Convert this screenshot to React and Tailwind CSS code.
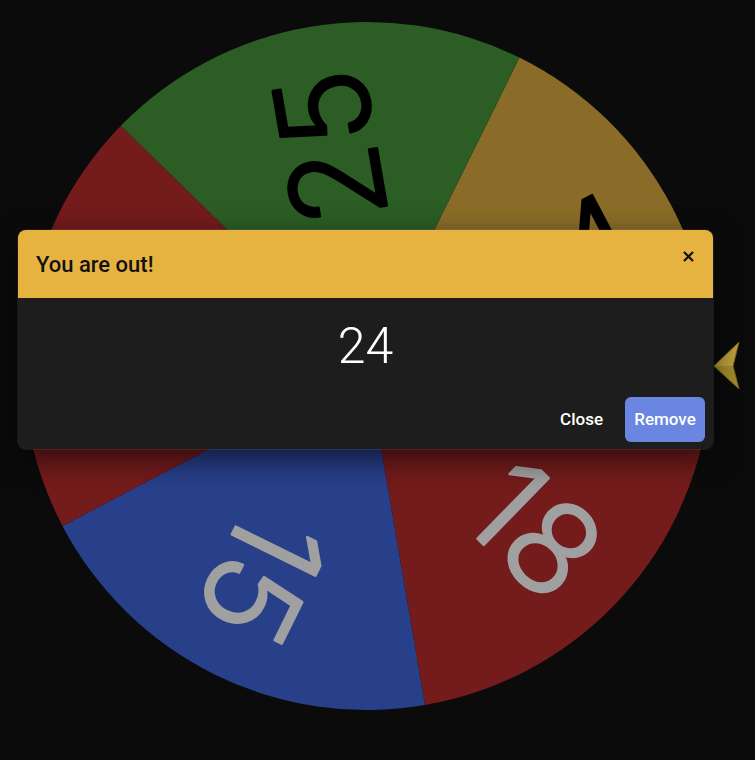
import React from "react";

const CX = 344;
const CY = 344;
const R = 344;

const segments = [
  { id: 1, label: "24", color: "#8a6c28", text: "#000000", start: 296.3 },
  { id: 2, label: "18", color: "#741b1b", text: "#a0a0a0", start: 8.3 },
  { id: 3, label: "15", color: "#283f8a", text: "#a0a0a0", start: 80.3 },
  { id: 4, label: "9", color: "#741b1b", text: "#a0a0a0", start: 152.3 },
  { id: 5, label: "25", color: "#2b5d24", text: "#000000", start: 224.3 },
];

const point = (deg, r) => {
  const a = (deg * Math.PI) / 180;
  return [CX + Math.cos(a) * r, CY + Math.sin(a) * r];
};

const slicePath = (start, sweep) => {
  const [x0, y0] = point(start, R);
  const [x1, y1] = point(start + sweep, R);
  return `M ${CX} ${CY} L ${x0} ${y0} A ${R} ${R} 0 0 1 ${x1} ${y1} Z`;
};

const Wheel = () => (
  <svg width="688" height="688" viewBox="0 0 688 688" className="block shrink-0">
    {segments.map((s) => (
      <path key={s.id} d={slicePath(s.start, 72)} fill={s.color} />
    ))}
    {segments.map((s) => {
      const mid = s.start + 36;
      return (
        <text
          key={`t${s.id}`}
          x={CX + 299}
          y={CY}
          transform={`rotate(${mid} ${CX} ${CY})`}
          textAnchor="end"
          dominantBaseline="central"
          fill={s.text}
          stroke={s.text}
          strokeWidth="2.5"
          strokeLinejoin="round"
          fontFamily="Inter, sans-serif"
          fontWeight="300"
          fontSize="128"
        >
          {s.label}
        </text>
      );
    })}
  </svg>
);

const Pointer = () => (
  <svg width="27" height="50" viewBox="0 0 27 50" className="ml-[2px] shrink-0">
    <polygon points="1,25 26,1 20,25" fill="#bd9e3a" />
    <polygon points="1,25 20,25 26,48" fill="#a68a2c" />
    <polygon points="1,25 26,1 20,25 26,48" fill="none" stroke="#7d6620" strokeWidth="1" strokeLinejoin="round" />
  </svg>
);

const ResultDialog = () => (
  <div className="absolute left-[18px] top-[230px] w-[695px] rounded-lg overflow-hidden bg-[#1d1d1d] shadow-[0_0_0_1px_rgba(255,255,255,0.08),0_10px_30px_rgba(0,0,0,0.6)]">
    {/* Title */}
    <div className="h-[68px] bg-[#e6b341] flex items-center justify-between pl-[18px] pr-[19px]">
      <h2 className="text-[22px] font-medium text-[#111]">You are out!</h2>
      <button className="self-start mt-[21px] flex items-center justify-center">
        <svg width="11" height="11" viewBox="0 0 11 11">
          <path d="M1 1 L10 10 M10 1 L1 10" stroke="#111" strokeWidth="2.2" />
        </svg>
      </button>
    </div>

    {/* Content */}
    <div className="pt-[23px] pb-[18px] text-center text-[50px] leading-none font-light text-white">
      24
    </div>

    {/* Actions */}
    <div className="flex justify-end items-center gap-[11px] pt-2 pr-2 pb-[7px]">
      <button className="h-[45px] px-[11px] text-[17px] font-medium text-white">Close</button>
      <button className="h-[45px] w-[80px] rounded-md bg-[#6a86e0] text-[17px] font-medium text-white">
        Remove
      </button>
    </div>
  </div>
);

export default function App() {
  return (
    <div className="relative min-h-screen bg-[#0b0b0b] font-['Roboto',sans-serif]">
      <div className="flex items-center pl-[23px] pt-[22px]">
        <Wheel />
        <Pointer />
      </div>
      <ResultDialog />
    </div>
  );
}
